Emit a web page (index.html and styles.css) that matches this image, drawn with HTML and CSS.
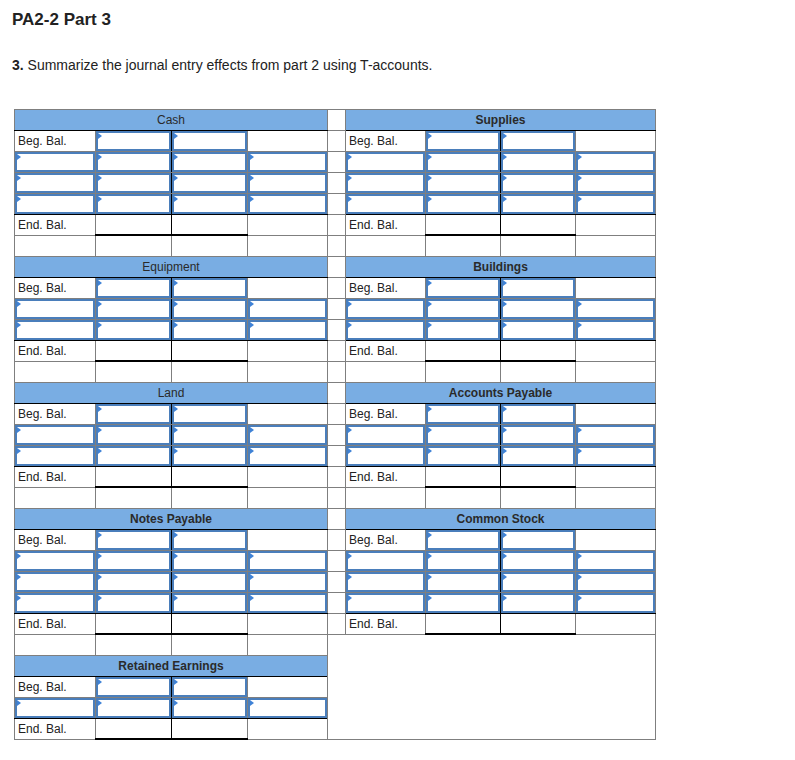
FILE: index.html
```html
<!DOCTYPE html>
<html>
<head>
<meta charset="utf-8">
<link rel="stylesheet" href="styles.css">
</head>
<body>
<h1 class="title">PA2-2 Part 3</h1>
<p class="intro"><b>3.</b> Summarize the journal entry effects from part 2 using T-accounts.</p>
<table class="grid">
<colgroup>
<col class="c1"><col class="c2"><col class="c3"><col class="c4"><col class="c5"><col class="c6"><col class="c7"><col class="c8"><col class="c9">
</colgroup>
<tbody>
<!-- Cash / Supplies -->
<tr><th class="hd" colspan="4">Cash</th><td class="sp"></td><th class="hd b" colspan="4">Supplies</th></tr>
<tr><td class="lbl">Beg. Bal.</td><td class="mid"><span class="box"></span></td><td><span class="box"></span></td><td></td><td class="sp"></td><td class="lbl">Beg. Bal.</td><td class="mid"><span class="box"></span></td><td><span class="box"></span></td><td></td></tr>
<tr><td><span class="box"></span></td><td class="mid"><span class="box"></span></td><td><span class="box"></span></td><td><span class="box"></span></td><td class="sp"></td><td><span class="box"></span></td><td class="mid"><span class="box"></span></td><td><span class="box"></span></td><td><span class="box"></span></td></tr>
<tr><td><span class="box"></span></td><td class="mid"><span class="box"></span></td><td><span class="box"></span></td><td><span class="box"></span></td><td class="sp"></td><td><span class="box"></span></td><td class="mid"><span class="box"></span></td><td><span class="box"></span></td><td><span class="box"></span></td></tr>
<tr class="pre"><td><span class="box"></span></td><td class="mid"><span class="box"></span></td><td><span class="box"></span></td><td><span class="box"></span></td><td class="sp"></td><td><span class="box"></span></td><td class="mid"><span class="box"></span></td><td><span class="box"></span></td><td><span class="box"></span></td></tr>
<tr class="end"><td class="lbl">End. Bal.</td><td class="mid ul"></td><td class="ul"></td><td></td><td class="sp"></td><td class="lbl">End. Bal.</td><td class="mid ul"></td><td class="ul"></td><td></td></tr>
<tr><td></td><td></td><td></td><td></td><td class="sp"></td><td></td><td></td><td></td><td></td></tr>
<!-- Equipment / Buildings -->
<tr><th class="hd" colspan="4">Equipment</th><td class="sp"></td><th class="hd b" colspan="4">Buildings</th></tr>
<tr><td class="lbl">Beg. Bal.</td><td class="mid"><span class="box"></span></td><td><span class="box"></span></td><td></td><td class="sp"></td><td class="lbl">Beg. Bal.</td><td class="mid"><span class="box"></span></td><td><span class="box"></span></td><td></td></tr>
<tr><td><span class="box"></span></td><td class="mid"><span class="box"></span></td><td><span class="box"></span></td><td><span class="box"></span></td><td class="sp"></td><td><span class="box"></span></td><td class="mid"><span class="box"></span></td><td><span class="box"></span></td><td><span class="box"></span></td></tr>
<tr class="pre"><td><span class="box"></span></td><td class="mid"><span class="box"></span></td><td><span class="box"></span></td><td><span class="box"></span></td><td class="sp"></td><td><span class="box"></span></td><td class="mid"><span class="box"></span></td><td><span class="box"></span></td><td><span class="box"></span></td></tr>
<tr class="end"><td class="lbl">End. Bal.</td><td class="mid ul"></td><td class="ul"></td><td></td><td class="sp"></td><td class="lbl">End. Bal.</td><td class="mid ul"></td><td class="ul"></td><td></td></tr>
<tr><td></td><td></td><td></td><td></td><td class="sp"></td><td></td><td></td><td></td><td></td></tr>
<!-- Land / Accounts Payable -->
<tr><th class="hd" colspan="4">Land</th><td class="sp"></td><th class="hd b" colspan="4">Accounts Payable</th></tr>
<tr><td class="lbl">Beg. Bal.</td><td class="mid"><span class="box"></span></td><td><span class="box"></span></td><td></td><td class="sp"></td><td class="lbl">Beg. Bal.</td><td class="mid"><span class="box"></span></td><td><span class="box"></span></td><td></td></tr>
<tr><td><span class="box"></span></td><td class="mid"><span class="box"></span></td><td><span class="box"></span></td><td><span class="box"></span></td><td class="sp"></td><td><span class="box"></span></td><td class="mid"><span class="box"></span></td><td><span class="box"></span></td><td><span class="box"></span></td></tr>
<tr class="pre"><td><span class="box"></span></td><td class="mid"><span class="box"></span></td><td><span class="box"></span></td><td><span class="box"></span></td><td class="sp"></td><td><span class="box"></span></td><td class="mid"><span class="box"></span></td><td><span class="box"></span></td><td><span class="box"></span></td></tr>
<tr class="end"><td class="lbl">End. Bal.</td><td class="mid ul"></td><td class="ul"></td><td></td><td class="sp"></td><td class="lbl">End. Bal.</td><td class="mid ul"></td><td class="ul"></td><td></td></tr>
<tr><td></td><td></td><td></td><td></td><td class="sp"></td><td></td><td></td><td></td><td></td></tr>
<!-- Notes Payable / Common Stock -->
<tr><th class="hd b" colspan="4">Notes Payable</th><td class="sp"></td><th class="hd b" colspan="4">Common Stock</th></tr>
<tr><td class="lbl">Beg. Bal.</td><td class="mid"><span class="box"></span></td><td><span class="box"></span></td><td></td><td class="sp"></td><td class="lbl">Beg. Bal.</td><td class="mid"><span class="box"></span></td><td><span class="box"></span></td><td></td></tr>
<tr><td><span class="box"></span></td><td class="mid"><span class="box"></span></td><td><span class="box"></span></td><td><span class="box"></span></td><td class="sp"></td><td><span class="box"></span></td><td class="mid"><span class="box"></span></td><td><span class="box"></span></td><td><span class="box"></span></td></tr>
<tr><td><span class="box"></span></td><td class="mid"><span class="box"></span></td><td><span class="box"></span></td><td><span class="box"></span></td><td class="sp"></td><td><span class="box"></span></td><td class="mid"><span class="box"></span></td><td><span class="box"></span></td><td><span class="box"></span></td></tr>
<tr class="pre"><td><span class="box"></span></td><td class="mid"><span class="box"></span></td><td><span class="box"></span></td><td><span class="box"></span></td><td class="sp"></td><td><span class="box"></span></td><td class="mid"><span class="box"></span></td><td><span class="box"></span></td><td><span class="box"></span></td></tr>
<tr class="end"><td class="lbl">End. Bal.</td><td class="mid ul"></td><td class="ul"></td><td></td><td class="sp"></td><td class="lbl">End. Bal.</td><td class="mid ul"></td><td class="ul"></td><td></td></tr>
<tr><td></td><td></td><td></td><td></td><td class="empty" colspan="5" rowspan="5"></td></tr>
<!-- Retained Earnings -->
<tr><th class="hd b" colspan="4">Retained Earnings</th></tr>
<tr><td class="lbl">Beg. Bal.</td><td class="mid"><span class="box"></span></td><td><span class="box"></span></td><td></td></tr>
<tr class="pre"><td><span class="box"></span></td><td class="mid"><span class="box"></span></td><td><span class="box"></span></td><td><span class="box"></span></td></tr>
<tr class="end"><td class="lbl">End. Bal.</td><td class="mid ul"></td><td class="ul"></td><td></td></tr>
</tbody>
</table>
</body>
</html>
```

FILE: styles.css
```css
html, body {
  margin: 0;
  padding: 0;
  background: #ffffff;
}

body {
  padding: 0 0 0 12px;
  font-family: "Liberation Sans", Arial, sans-serif;
  color: #1f1f1f;
}

.title {
  margin: 0;
  padding-top: 10px;
  font-size: 17px;
  line-height: 20px;
  font-weight: 700;
  color: #222222;
}

.intro {
  margin: 0;
  padding-top: 27px;
  font-size: 14px;
  line-height: 17px;
  color: #222222;
}

.intro b {
  font-weight: 700;
}

.grid {
  margin: 35px 0 0 2px;
  border-collapse: collapse;
  table-layout: fixed;
  width: 641px;
}

.c1 { width: 81px; }
.c2 { width: 76px; }
.c3 { width: 76px; }
.c4 { width: 80px; }
.c5 { width: 18px; }
.c6 { width: 80px; }
.c7 { width: 75px; }
.c8 { width: 75px; }
.c9 { width: 80px; }

.grid td,
.grid th {
  border: 1px solid #7f7f7f;
  padding: 0;
  height: 20px;
  font-size: 12px;
  line-height: 14px;
  vertical-align: middle;
}

.grid .end td {
  height: 19px;
}

.grid .hd {
  background: #79ade3;
  color: #2a2a2a;
  font-weight: 400;
  text-align: center;
  border-bottom: 1px solid #000000;
}

.grid .hd.b {
  font-weight: 700;
}

.grid .lbl {
  padding-left: 3px;
  color: #222222;
  text-align: left;
}

.grid .mid {
  border-right: 1px solid #000000;
}

.grid .pre td {
  border-bottom: 1px solid #000000;
}

.grid .pre td.sp {
  border-bottom: 1px solid #7f7f7f;
}

.grid .ul {
  border-bottom: 2px solid #000000;
}

.box {
  display: block;
  position: relative;
  box-sizing: border-box;
  height: 20px;
  border: 2px solid #4a7ebb;
}

.box::before {
  content: "";
  position: absolute;
  left: 0;
  top: 0;
  border-left: 4px solid #3f82d6;
  border-top: 3px solid transparent;
  border-bottom: 3px solid transparent;
}
```
